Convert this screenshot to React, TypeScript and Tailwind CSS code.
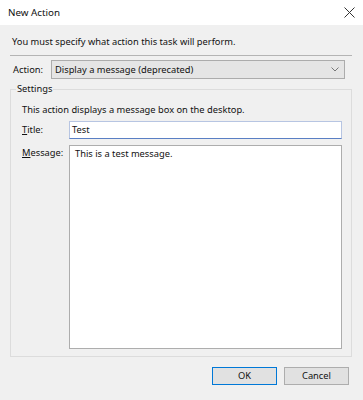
import React from "react";

export default function App() {
  return (
    <div
      className="w-[363px] h-[400px] flex flex-col text-[9.3px] text-[#111] overflow-hidden"
      style={{ fontFamily: '"Noto Sans", "Open Sans", sans-serif' }}
    >
      {/* Title bar */}
      <div className="h-[25px] bg-white flex items-center justify-between pl-[8px] pr-[8px] shrink-0">
        <span className="leading-[12px] text-[9.8px]">New Action</span>
        <svg width="11" height="11" viewBox="0 0 11 11">
          <path d="M0.5 0.5 L10.5 10.5 M10.5 0.5 L0.5 10.5" stroke="#333" strokeWidth="1" fill="none" />
        </svg>
      </div>

      {/* Body */}
      <div className="flex-1 flex flex-col bg-[#f0f0f0] px-[10px]">
        <div className="mt-[11px] h-[12px] leading-[12px] pl-[2px]">
          You must specify what action this task will perform.
        </div>
        <div className="mt-[7px] h-[1px] bg-[#b4b4b4] mr-[1px]" />

        {/* Action row */}
        <div className="mt-[4px] flex items-center h-[19px]">
          <div className="w-[41px] pl-[3px] leading-[12px]">Action:</div>
          <div className="flex-1 mr-[8px] h-[19px] border border-[#acacac] bg-[#e5e5e5] flex items-center justify-between pl-[3px] pr-[5px]">
            <span className="leading-[12px]">Display a message (deprecated)</span>
            <svg width="8" height="5" viewBox="0 0 8 5">
              <path d="M0.5 0.5 L4 4 L7.5 0.5" stroke="#777" strokeWidth="1" fill="none" />
            </svg>
          </div>
        </div>

        {/* Settings group */}
        <div className="mt-[10px] mr-[1px] border border-[#dcdcdc] flex flex-col pl-[11px] pr-[9px] pb-[7px]">
          <div className="-mt-[7px] -ml-[6px] px-[1px] bg-[#f0f0f0] w-fit leading-[12px]">
            Settings
          </div>
          <div className="mt-[9px] leading-[12px]">
            This action displays a message box on the desktop.
          </div>
          <div className="mt-[5px] flex items-center h-[18px]">
            <div className="w-[47px] leading-[12px]">
              <span className="underline underline-offset-[1px]">T</span>itle:
            </div>
            <div className="flex-1 h-[18px] bg-white border border-[#b7c5e2] border-b-[#5a7fc4] flex items-center pl-[2px] leading-[12px]">
              Test
            </div>
          </div>
          <div className="mt-[6px] flex items-start">
            <div className="w-[47px] leading-[12px] pt-[2px]">
              <span className="underline underline-offset-[1px]">M</span>essage:
            </div>
            <div className="flex-1 h-[204px] bg-white border border-[#adadad] pl-[5px] pt-[2px] leading-[12px]">
              This is a test message.
            </div>
          </div>
        </div>

        {/* Buttons */}
        <div className="mt-[10px] flex justify-end gap-[7px] pr-[4px]">
          <button className="w-[65px] h-[18px] border border-[#0078d7] bg-[#e1e1e1] leading-[12px] text-[9.3px]">
            OK
          </button>
          <button className="w-[65px] h-[18px] border border-[#adadad] bg-[#e1e1e1] leading-[12px] text-[9.3px]">
            Cancel
          </button>
        </div>
      </div>
    </div>
  );
}
